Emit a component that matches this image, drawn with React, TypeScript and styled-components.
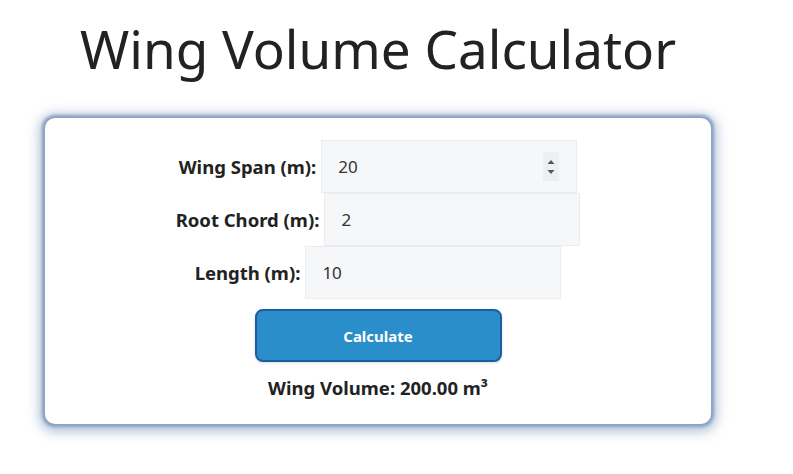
import React from "react";
import styled, { createGlobalStyle } from "styled-components";

const Global = createGlobalStyle`
  html, body { margin: 0; padding: 0; background: #ffffff; }
  body { font-family: "Noto Sans", "Open Sans", sans-serif; color: #222; }
`;

const Page = styled.div`
  padding: 14px 0 40px 45px;
`;

const Column = styled.div`
  width: 666px;
  display: flex;
  flex-direction: column;
  align-items: center;
`;

const Title = styled.h1`
  margin: 0 0 34px 0;
  font-family: "Noto Sans", sans-serif;
  font-weight: 400;
  font-size: 53px;
  line-height: 70px;
  color: #222;
`;

const Card = styled.div`
  width: 666px;
  height: 306px;
  box-sizing: border-box;
  background: #fff;
  border-radius: 10px;
  box-shadow: 0 0 3px 3px #8aa3c3, 0 2px 12px 6px rgba(120, 150, 190, 0.55);
  padding-top: 22px;
  display: flex;
  flex-direction: column;
  align-items: center;
`;

const Row = styled.div`
  display: flex;
  align-items: center;
  gap: 5px;
`;

const Label = styled.label`
  font-weight: 700;
  font-size: 18.5px;
  color: #222;
`;

const Field = styled.div`
  position: relative;
`;

const Input = styled.input`
  width: 256px;
  height: 53px;
  box-sizing: border-box;
  border: 1px solid #ececee;
  background: #f6f7f9;
  padding: 0 16px;
  font-family: "Noto Sans", sans-serif;
  font-size: 17px;
  color: #333;
  outline: none;
`;

const Spinner = styled.div`
  position: absolute;
  right: 18px;
  top: 12px;
  width: 16px;
  height: 29px;
  background: #eeeff1;
  display: flex;
  align-items: center;
  justify-content: center;
`;

const Button = styled.button`
  margin-top: 10px;
  width: 247px;
  height: 53px;
  background: #2a8ecb;
  border: 2px solid #1c5e9e;
  border-radius: 8px;
  color: #fff;
  font-family: "Noto Sans", sans-serif;
  font-weight: 700;
  font-size: 15px;
  box-shadow: 0 1px 3px rgba(0, 0, 0, 0.15);
`;

const Result = styled.p`
  margin: 13px 0 0 0;
  font-weight: 700;
  font-size: 18.5px;
  color: #222;
`;

export default function App() {
  return (
    <>
      <Global />
      <Page>
        <Column>
          <Title>Wing Volume Calculator</Title>
          <Card>
            <Row>
              <Label>Wing Span (m):</Label>
              <Field>
                <Input type="text" defaultValue="20" />
                <Spinner>
                  <svg width="10" height="26" viewBox="0 0 10 26">
                    <path d="M5 6 L8.5 10 L1.5 10 Z" fill="#555" />
                    <path d="M5 20 L8.5 16 L1.5 16 Z" fill="#555" />
                  </svg>
                </Spinner>
              </Field>
            </Row>
            <Row>
              <Label>Root Chord (m):</Label>
              <Input type="text" defaultValue="2" />
            </Row>
            <Row>
              <Label>Length (m):</Label>
              <Input type="text" defaultValue="10" />
            </Row>
            <Button>Calculate</Button>
            <Result>Wing Volume: 200.00 m³</Result>
          </Card>
        </Column>
      </Page>
    </>
  );
}
